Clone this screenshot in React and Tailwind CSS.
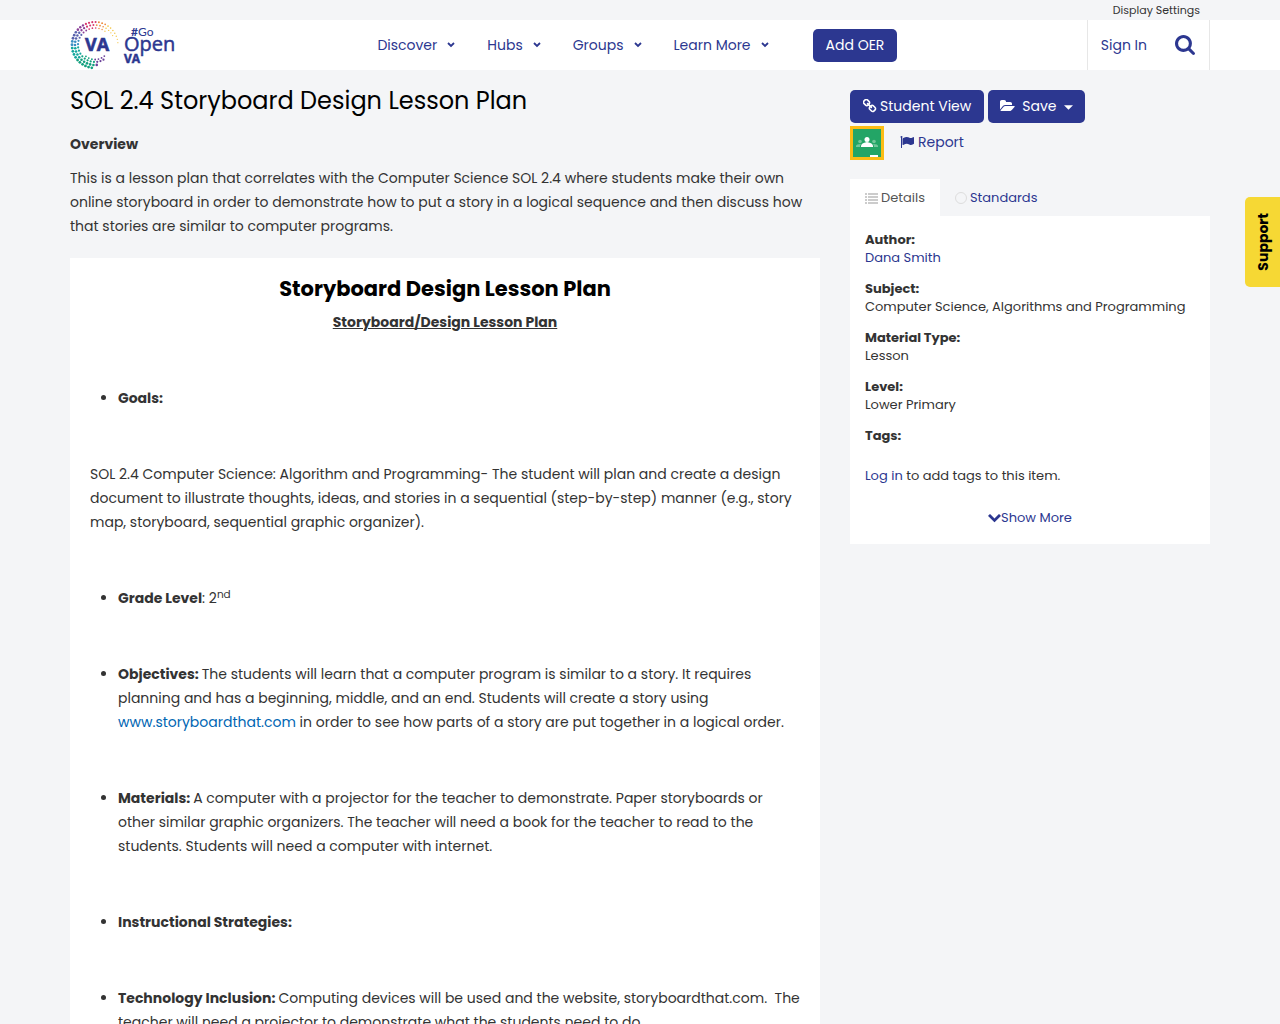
import clsx from 'clsx'

const navItems = ['Discover', 'Hubs', 'Groups', 'Learn More']

const details = [
    { label: 'Author:', value: 'Dana Smith', link: true },
    { label: 'Subject:', value: 'Computer Science, Algorithms and Programming' },
    { label: 'Material Type:', value: 'Lesson' },
    { label: 'Level:', value: 'Lower Primary' },
]

const icons = {
    link: {
        box: '64 64 1664 1664',
        d: 'M1456 1216q0-40-28-68l-208-208q-28-28-68-28-42 0-72 32 3 3 19 18.5t21.5 21.5 15 19 13 25.5 3.5 27.5q0 40-28 68t-68 28q-15 0-27.5-3.5t-25.5-13-19-15-21.5-21.5-18.5-19q-33 31-33 73 0 40 28 68l206 207q27 27 68 27 40 0 68-26l147-146q28-28 28-67zm-703-705q0-40-28-68l-206-207q-28-28-68-28-39 0-68 27l-147 146q-28 28-28 67 0 40 28 68l208 208q27 27 68 27 42 0 72-31-3-3-19-18.5t-21.5-21.5-15-19-13-25.5-3.5-27.5q0-40 28-68t68-28q15 0 27.5 3.5t25.5 13 19 15 21.5 21.5 18.5 19q33-31 33-73zm895 705q0 120-85 203l-147 146q-83 83-203 83-121 0-204-85l-206-207q-83-83-83-203 0-123 88-209l-88-88q-86 88-208 88-120 0-204-84l-208-208q-84-84-84-204t85-203l147-146q83-83 203-83 121 0 204 85l206 207q83 83 83 203 0 123-88 209l88 88q86-88 208-88 120 0 204 84l208 208q84 84 84 204z',
    },
    search: {
        box: '64 128 1664 1664',
        d: 'M1216 832q0-185-131.5-316.5t-316.5-131.5-316.5 131.5-131.5 316.5 131.5 316.5 316.5 131.5 316.5-131.5 131.5-316.5zm512 832q0 52-38 90t-90 38q-54 0-90-38l-343-342q-179 124-399 124-143 0-273.5-55.5t-225-150-150-225-55.5-273.5 55.5-273.5 150-225 225-150 273.5-55.5 273.5 55.5 225 150 150 225 55.5 273.5q0 220-124 399l343 343q37 37 37 90z',
    },
    folder: {
        box: '0 0 1920 1792',
        d: 'M1879 952q0 31-31 66l-336 396q-43 51-120.5 86.5t-143.5 35.5h-1088q-34 0-60.5-13t-26.5-43q0-31 31-66l336-396q43-51 120.5-86.5t143.5-35.5h1088q34 0 60.5 13t26.5 43zm-343-344v160h-832q-94 0-197 47.5t-164 119.5l-337 396-5 6q0-4-.5-12.5t-.5-12.5v-960q0-92 66-158t158-66h320q92 0 158 66t66 158v32h544q92 0 158 66t66 158z',
    },
    flag: {
        box: '0 0 1792 1792',
        d: 'M320 256q0 72-64 110v1266q0 13-9.5 22.5t-22.5 9.5h-64q-13 0-22.5-9.5t-9.5-22.5v-1266q-64-38-64-110 0-53 37.5-90.5t90.5-37.5 90.5 37.5 37.5 90.5zm1472 64v763q0 25-12.5 38.5t-39.5 27.5q-215 116-369 116-61 0-123.5-22t-108.5-48-115.5-48-142.5-22q-192 0-464 146-17 9-33 9-26 0-45-19t-19-45v-742q0-32 31-55 21-14 79-43 236-120 421-120 107 0 200 29t219 88q38 19 88 19 54 0 117.5-21t110-47 88-47 54.5-21q26 0 45 19t19 45z',
    },
    chevron: {
        box: '64 384 1664 1280',
        d: 'M1683 808l-742 741q-19 19-45 19t-45-19l-742-741q-19-19-19-45.5t19-45.5l166-165q19-19 45-19t45 19l531 531 531-531q19-19 45-19t45 19l166 165q19 19 19 45.5t-19 45.5z',
    },
    list: {
        box: '0 0 13 11',
        d: 'M0 0h2v2H0zM3 0h10v2H3zM0 3h2v2H0zM3 3h10v2H3zM0 6h2v2H0zM3 6h10v2H3zM0 9h2v2H0zM3 9h10v2H3z',
    },
    caret: { box: '0 0 8 4', d: 'M0 0h8L4 4z' },
}

const Icon = ({ name, className }) => (
    <svg viewBox={icons[name].box} fill="currentColor" aria-hidden="true" className={clsx('shrink-0', className)}>
        <path d={icons[name].d} />
    </svg>
)

// ring of dots: [radius, dot size, start angle, end angle]
const rings = [
    [23, 1.4, 98, 355],
    [20, 1.3, 85, 335],
    [17, 1.1, 60, 310],
    [14.5, 0.9, 50, 130],
]

const dotColor = (angle) => {
    if (angle < 90) return '#6a3f98'
    if (angle < 140) return '#12a07e'
    if (angle < 175) return '#14a79d'
    if (angle < 195) return '#3a8fc4'
    if (angle < 220) return '#5a62ae'
    if (angle < 245) return '#8b3f97'
    if (angle < 275) return '#d8396f'
    if (angle < 300) return '#ee8a3c'
    return '#f3c544'
}

const Logo = () => {
    const dots = []
    rings.forEach(([radius, size, from, to]) => {
        for (let angle = from; angle <= to; angle += 190 / radius) {
            const rad = (angle * Math.PI) / 180
            // dots get smaller towards the end of the arc
            const fade = angle > 200 ? 1 - (angle - 200) / 260 : 1
            dots.push(
                <circle
                    key={`${radius}-${angle}`}
                    cx={25 + radius * Math.cos(rad)}
                    cy={25 + radius * Math.sin(rad)}
                    r={size * fade}
                    fill={dotColor(angle)}
                />
            )
        }
    })

    return (
        <svg width="106" height="50" viewBox="0 0 106 50" role="img" aria-label="#GoOpenVA">
            {dots}
            <g fill="#2c3790" stroke="#2c3790" fontFamily="'Open Sans', sans-serif">
                <text x="15" y="31" fontSize="18" fontWeight="700" strokeWidth="0.6">VA</text>
                <text x="61" y="16" fontSize="12" stroke="none" fontFamily="Lato, sans-serif"><tspan fontWeight="700">#</tspan>Go</text>
                <text x="54" y="31" fontSize="20" strokeWidth="0.5">Open</text>
                <text x="54" y="43" fontSize="12" fontWeight="700" strokeWidth="0.5">VA</text>
            </g>
        </svg>
    )
}

const Header = () => (
    <header>
        <div className="mx-auto flex h-5 max-w-[1140px] justify-end pr-2.5 text-[11px] leading-5">
            <button type="button">Display Settings</button>
        </div>
        <div className="bg-white">
            <div className="mx-auto flex h-[50px] max-w-[1140px] items-center justify-between text-sm text-[#2c3790]">
                <a href="#home"><Logo /></a>
                <nav className="flex items-center gap-8 pl-3">
                    {navItems.map((item) => (
                        <button key={item} type="button" className="flex items-center gap-2.5">
                            {item}
                            <svg width="8" height="6" viewBox="0 0 8 6" fill="none" stroke="currentColor" strokeWidth="1.8" aria-hidden="true">
                                <path d="M1 1l3 3 3-3" />
                            </svg>
                        </button>
                    ))}
                    <a href="#add" className="ml-3 flex h-[33px] items-center rounded-[5px] bg-[#2c3790] px-[13px] text-white">
                        Add OER
                    </a>
                </nav>
                <div className="flex h-full items-center gap-7 border-x border-[#e7e7e7] pr-3.5 pl-[13px]">
                    <a href="#signin">Sign In</a>
                    <button type="button" aria-label="Search">
                        <Icon name="search" className="size-5" />
                    </button>
                </div>
            </div>
        </div>
    </header>
)

const Lesson = () => (
    <article className="mt-5 bg-white px-5 pt-[17px] pb-10 leading-6">
        <h2 className="text-center text-[21px] leading-7 font-bold text-black">Storyboard Design Lesson Plan</h2>
        <div className="mt-[7px] flex flex-col gap-13">
            <p className="text-center font-bold underline">Storyboard/Design Lesson Plan</p>
            <ul className="list-disc pl-7">
                <li><strong>Goals:</strong></li>
            </ul>
            <p>
                SOL 2.4 Computer Science: Algorithm and Programming- The student will plan and create a design
                document to illustrate thoughts, ideas, and stories in a sequential (step-by-step) manner (e.g., story
                map, storyboard, sequential graphic organizer).
            </p>
            <ul className="flex list-disc flex-col gap-13 pl-7">
                <li><strong>Grade Level</strong>: 2<sup>nd</sup></li>
                <li>
                    <strong>Objectives: </strong>
                    The students will learn that a computer program is similar to a story. It requires planning and has
                    a beginning, middle, and an end. Students will create a story using{' '}
                    <a href="#storyboardthat" className="text-[#0066b3]">www.storyboardthat.com</a> in order to see how
                    parts of a story are put together in a logical order.
                </li>
                <li>
                    <strong>Materials: </strong>
                    A computer with a projector for the teacher to demonstrate. Paper storyboards or other similar
                    graphic organizers. The teacher will need a book for the teacher to read to the students. Students
                    will need a computer with internet.
                </li>
                <li><strong>Instructional Strategies:</strong></li>
                <li>
                    <strong>Technology Inclusion: </strong>
                    Computing devices will be used and the website, storyboardthat.com.&nbsp; The teacher will need a
                    projector to demonstrate what the students need to do.
                </li>
            </ul>
        </div>
    </article>
)

const Sidebar = () => (
    <aside className="w-[360px] shrink-0 pt-5 text-[#2c3790]">
        <div className="flex gap-1 text-sm text-white">
            <a href="#student" className="flex h-[33px] items-center gap-[3px] rounded-[5px] bg-[#2c3790] px-[13px] pb-0.5">
                <Icon name="link" className="size-3.5" />
                Student View
            </a>
            <button type="button" className="flex h-[33px] items-center gap-[7px] rounded-[5px] bg-[#2c3790] px-3 pb-0.5">
                <Icon name="folder" className="h-3.5 w-[15px]" />
                Save
                <Icon name="caret" className="mt-1 h-[5px] w-[9px]" />
            </button>
        </div>
        <div className="mt-[3px] flex gap-4 text-sm">
            <button type="button" aria-label="Share to Google Classroom">
                <svg width="34" height="34" viewBox="0 0 34 34">
                    <path fill="#fbbc14" d="M0 0h34v34H0z" />
                    <path fill="#23a566" d="M3 3h28v28H3z" />
                    <path fill="#fff" d="M20 29h8v2h-8zM11 21v-1q0-3 6-4 6 1 6 4v1z" />
                    <circle cx="17" cy="13.500" r="2.500" fill="#fff" />
                    <g fill="#73c69b">
                        <circle cx="10" cy="15.500" r="1.800" />
                        <circle cx="24" cy="15.500" r="1.800" />
                        <path d="M6 21v-1q0-2 5-2-1 1-1 3zM28 21v-1q0-2-5-2 1 1 1 3z" />
                    </g>
                </svg>
            </button>
            <a href="#report" className="flex h-8 items-center gap-1">
                <Icon name="flag" className="size-3.5" />
                Report
            </a>
        </div>
        <div role="tablist" className="mt-[19px] flex h-[37px] text-[13px]">
            <button type="button" role="tab" aria-selected="true" className="flex items-center gap-[3px] bg-white px-[15px] pt-px text-[#555]">
                <Icon name="list" className="h-[11px] w-[13px] text-[#ccc]" />
                Details
            </button>
            <button type="button" role="tab" aria-selected="false" className="flex items-center gap-[3px] px-[15px] pt-px">
                <span className="size-3 rounded-full border border-[#ddd]" />
                Standards
            </button>
        </div>
        <div className="bg-white px-[15px] pt-[15px] pb-[17px] text-[13px] leading-[18px]">
            <dl className="flex flex-col gap-[13px] text-[#333]">
                {details.map(({ label, value, link }) => (
                    <div key={label}>
                        <dt className="font-bold">{label}</dt>
                        <dd>{link ? <a href="#author" className="text-[#2c3790]">{value}</a> : value}</dd>
                    </div>
                ))}
                <div>
                    <dt className="font-bold">Tags:</dt>
                    <dd className="mt-[22px]"><a href="#login" className="text-[#2c3790]">Log in</a> to add tags to this item.</dd>
                </div>
            </dl>
            <button type="button" className="mx-auto mt-6 flex items-center">
                <Icon name="chevron" className="h-2.5 w-[13px]" />
                Show More
            </button>
        </div>
    </aside>
)

const App = () => (
    <div className="min-h-screen bg-[#f4f5f7] font-[Poppins,Inter,sans-serif] text-sm text-[#333]">
        <Header />
        <div className="mx-auto flex max-w-[1140px] items-start gap-[30px]">
            <main className="min-w-0 flex-1 pt-[15px]">
                <h1 className="text-2xl leading-8 text-black">SOL 2.4 Storyboard Design Lesson Plan</h1>
                <h2 className="mt-[15px] leading-6 font-bold">Overview</h2>
                <p className="mt-2.5 leading-6">
                    This is a lesson plan that correlates with the Computer Science SOL 2.4 where students make their
                    own online storyboard in order to demonstrate how to put a story in a logical sequence and then
                    discuss how that stories are similar to computer programs.
                </p>
                <Lesson />
            </main>
            <Sidebar />
        </div>
        <button
            type="button"
            className="fixed top-[197px] right-0 flex h-[90px] w-[35px] items-center justify-center rounded-l-[5px] bg-[#f6d834] font-bold text-black"
        >
            <span className="rotate-180 [writing-mode:vertical-rl]">Support</span>
        </button>
    </div>
)

export default App
